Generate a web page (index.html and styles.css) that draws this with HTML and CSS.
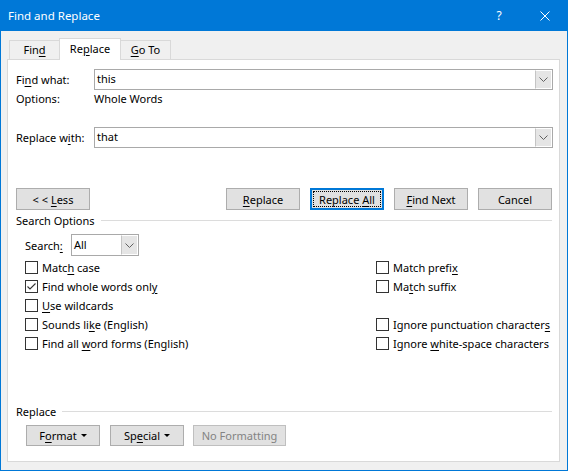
FILE: index.html
```html
<!DOCTYPE html>
<html lang="en">
<head>
    <meta charset="UTF-8" />
    <title>Find and Replace</title>
    <link rel="stylesheet" href="styles.css">
</head>
<body>
    <div class="window">
        <!-- Title bar -->
        <div class="titlebar">
            <span class="title">Find and Replace</span>
            <span class="help">?</span>
            <span class="close">
                <svg width="10" height="10" viewBox="0 0 10 10"><path d="M0.5 0.5 L9.5 9.5 M9.5 0.5 L0.5 9.5" stroke="#fff" stroke-width="1" fill="none"/></svg>
            </span>
        </div>

        <div class="dialog-body">
            <!-- Tabs -->
            <div class="tabs">
                <div class="tab tab-first">Fin<u>d</u></div>
                <div class="tab active">Re<u>p</u>lace</div>
                <div class="tab tab-last"><u>G</u>o To</div>
            </div>

            <div class="panel">
                <div class="field-row">
                    <span class="field-label">Fi<u>n</u>d what:</span>
                    <div class="combo">
                        <span class="combo-text">this</span>
                        <span class="combo-btn"><svg width="9" height="5" viewBox="0 0 9 5"><path d="M0.5 0.5 L4.5 4.5 L8.5 0.5" stroke="#606060" fill="none"/></svg></span>
                    </div>
                </div>
                <div class="options-row">
                    <span class="field-label">Options:</span>
                    <span>Whole Words</span>
                </div>
                <div class="field-row replace-row">
                    <span class="field-label">Replace w<u>i</u>th:</span>
                    <div class="combo">
                        <span class="combo-text">that</span>
                        <span class="combo-btn"><svg width="9" height="5" viewBox="0 0 9 5"><path d="M0.5 0.5 L4.5 4.5 L8.5 0.5" stroke="#606060" fill="none"/></svg></span>
                    </div>
                </div>

                <div class="button-row">
                    <button class="btn"><span>&lt; &lt; <u>L</u>ess</span></button>
                    <div class="spacer"></div>
                    <button class="btn"><span><u>R</u>eplace</span></button>
                    <button class="btn btn-default"><span class="focus-rect"><span>Replace <u>A</u>ll</span></span></button>
                    <button class="btn"><span><u>F</u>ind Next</span></button>
                    <button class="btn"><span>Cancel</span></button>
                </div>

                <!-- Search options -->
                <div class="group-title">
                    <span>Search Options</span>
                    <span class="rule"></span>
                </div>
                <div class="search-row">
                    <span class="search-label">Search<u>:</u></span>
                    <div class="combo combo-small">
                        <span class="combo-text">All</span>
                        <span class="combo-btn"><svg width="9" height="5" viewBox="0 0 9 5"><path d="M0.5 0.5 L4.5 4.5 L8.5 0.5" stroke="#606060" fill="none"/></svg></span>
                    </div>
                </div>
                <div class="checks">
                    <label class="check"><span class="box"></span><span>Matc<u>h</u> case</span></label>
                    <label class="check"><span class="box"></span><span>Match prefi<u>x</u></span></label>
                    <label class="check"><span class="box"><svg width="11" height="11" viewBox="0 0 11 11"><path d="M1.5 5.5 L4 8 L9.5 2.5" stroke="#333" stroke-width="1.1" fill="none"/></svg></span><span>Find whole words onl<u>y</u></span></label>
                    <label class="check"><span class="box"></span><span>Ma<u>t</u>ch suffix</span></label>
                    <label class="check"><span class="box"></span><span><u>U</u>se wildcards</span></label>
                    <div></div>
                    <label class="check"><span class="box"></span><span>Sounds li<u>k</u>e (English)</span></label>
                    <label class="check"><span class="box"></span><span>Ignore punctuation character<u>s</u></span></label>
                    <label class="check"><span class="box"></span><span>Find all <u>w</u>ord forms (English)</span></label>
                    <label class="check"><span class="box"></span><span>Ignore <u>w</u>hite-space characters</span></label>
                </div>

                <!-- Replace formatting -->
                <div class="group-title replace-group">
                    <span>Replace</span>
                    <span class="rule"></span>
                </div>
                <div class="bottom-buttons">
                    <button class="btn"><span>F<u>o</u>rmat</span><span class="caret"></span></button>
                    <button class="btn"><span>Sp<u>e</u>cial</span><span class="caret"></span></button>
                    <button class="btn btn-disabled"><span>No Formatting</span></button>
                </div>
            </div>
        </div>
    </div>
</body>
</html>
```

FILE: styles.css
```css
* {
    margin: 0;
    padding: 0;
    box-sizing: border-box;
}
body {
    font-family: "Noto Sans", sans-serif;
    font-size: 11px;
    color: #000;
    background: #f0f0f0;
}
u {
    text-decoration: underline;
    text-underline-offset: 2px;
}
.window {
    width: 568px;
    height: 471px;
    border: 1px solid #0078d7;
    border-top: none;
    background: #f0f0f0;
    display: flex;
    flex-direction: column;
}
.titlebar {
    height: 31px;
    background: #0078d7;
    color: #fff;
    display: flex;
    align-items: center;
    padding-left: 8px;
    margin: 0 -1px;
}
.title {
    flex: 1;
    font-size: 11.5px;
}
.help {
    font-size: 12px;
    width: 46px;
    text-align: center;
}
.close {
    width: 46px;
    display: flex;
    justify-content: center;
    align-items: center;
}
.dialog-body {
    flex: 1;
    padding: 7px 7px 8px 6px;
    display: flex;
    flex-direction: column;
}

/* tabs */
.tabs {
    display: flex;
    height: 21px;
    padding-left: 2px;
    position: relative;
    z-index: 1;
}
.tab {
    margin-top: 2px;
    height: 19px;
    border: 1px solid #d9d9d9;
    border-bottom: none;
    background: #f0f0f0;
    text-align: center;
    line-height: 18px;
}
.tab-first {
    width: 50px;
    border-right: none;
}
.tab-last {
    width: 50px;
    border-left: none;
}
.tab.active {
    margin-top: 0;
    height: 22px;
    width: 62px;
    background: #fff;
    line-height: 20px;
}

.panel {
    flex: 1;
    background: #fff;
    border: 1px solid #d9d9d9;
    padding: 9px 6px 0 8px;
}
.field-row {
    display: flex;
    align-items: center;
    height: 21px;
}
.field-label {
    width: 78px;
}
.combo {
    flex: 1;
    height: 21px;
    border: 1px solid #a9a9a9;
    display: flex;
    align-items: stretch;
}
.combo-text {
    flex: 1;
    padding-left: 2px;
    line-height: 18px;
}
.combo-btn {
    width: 17px;
    background: #e5e5e5;
    border: 1px solid #fff;
    border-left: 1px solid #c4c4c4;
    display: flex;
    align-items: center;
    justify-content: center;
}
.options-row {
    display: flex;
    align-items: center;
    height: 17px;
}
.replace-row {
    margin-top: 20px;
}

/* buttons */
.button-row {
    display: flex;
    gap: 10px;
    margin-top: 40px;
    margin-right: 1px;
}
.spacer {
    flex: 1;
}
.btn {
    font-family: inherit;
    font-size: 11px;
    color: #000;
    width: 74px;
    height: 22px;
    background: #e1e1e1;
    border: 1px solid #adadad;
    display: flex;
    align-items: center;
    justify-content: center;
}
.btn-default {
    border: 2px solid #0078d7;
    padding: 1px;
}
.focus-rect {
    width: 100%;
    height: 100%;
    border: 1px dotted #000;
    display: flex;
    align-items: center;
    justify-content: center;
}
.btn-disabled {
    color: #838383;
    border-color: #bfbfbf;
    width: 93px;
}
.caret {
    display: inline-block;
    margin-left: 4px;
    border-left: 3px solid transparent;
    border-right: 3px solid transparent;
    border-top: 3px solid #000;
}

.group-title {
    display: flex;
    align-items: center;
    height: 20px;
    gap: 6px;
    margin-right: 1px;
}
.rule {
    flex: 1;
    border-top: 1px solid #dcdcdc;
    margin-top: 1px;
}
.search-row {
    display: flex;
    align-items: center;
    margin-top: 4px;
    padding-left: 9px;
}
.search-label {
    width: 46px;
}
.combo-small {
    flex: none;
    width: 68px;
    height: 22px;
}
.combo-small .combo-text {
    line-height: 19px;
}
.checks {
    display: grid;
    grid-template-columns: 351px auto;
    grid-auto-rows: 19px;
    margin-top: 2px;
    padding-left: 9px;
}
.check {
    display: flex;
    align-items: center;
    gap: 4px;
    white-space: nowrap;
}
.box {
    width: 13px;
    height: 13px;
    border: 1px solid #333;
    background: #fff;
    display: flex;
    align-items: center;
    justify-content: center;
}
.replace-group {
    margin-top: 48px;
}
.bottom-buttons {
    display: flex;
    gap: 10px;
    margin-top: 4px;
    padding-left: 10px;
}
.bottom-buttons .btn {
    height: 21px;
}
.bottom-buttons .btn-disabled {
    margin-left: -1px;
}
```
